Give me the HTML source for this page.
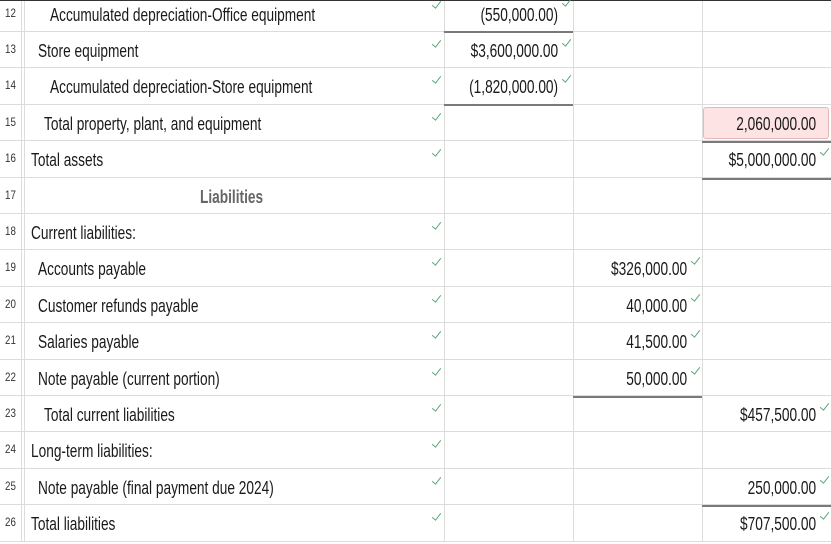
<!DOCTYPE html>
<html><head><meta charset="utf-8"><style>
body{margin:0;width:831px;height:542px;overflow:hidden;background:#fff;font-family:"Liberation Sans",sans-serif;position:relative}
.r{position:absolute;left:0;width:831px;height:36.4px;border-bottom:1px solid #dcdcdc;box-sizing:border-box}
.n{position:absolute;left:0;width:21px;text-align:center;font-size:11.5px;color:#333;line-height:37px;transform:scaleX(0.85)}
.l{position:absolute;top:0;line-height:39px;font-size:18px;color:#1a1a1a;white-space:nowrap;transform:scaleX(0.76);transform-origin:left center}
.v{position:absolute;top:0;line-height:39px;font-size:18px;color:#1a1a1a;white-space:nowrap;transform:scaleX(0.76);transform-origin:right center}
.a{right:273px}.b{right:144px}.cc{right:15px}
.c{position:absolute;width:3.5px;height:8px;border-right:1.8px solid #5aa87a;border-bottom:1.8px solid #5aa87a;transform:rotate(38deg)}
.vl{position:absolute;top:0;height:542px;width:1px;background:#dcdcdc}
.ul{position:absolute;height:2px;background:#7a7a7a}
</style></head><body>
<div class="vl" style="left:21px"></div><div class="vl" style="left:24px"></div>
<div class="vl" style="left:444px"></div><div class="vl" style="left:573px"></div><div class="vl" style="left:702px"></div>
<div style="position:absolute;left:0;top:0;width:831px;height:1px;background:#333"></div>

<div class="r" style="top:-4.4px"><span class="n">12</span><span class="l" style="left:50px">Accumulated depreciation-Office equipment</span><i class="c" style="left:434px;top:3px"></i><span class="v a">(550,000.00)</span><i class="c" style="left:564px;top:1px"></i></div>
<div class="r" style="top:32px"><span class="n">13</span><span class="l" style="left:38px">Store equipment</span><i class="c" style="left:434px;top:6px"></i><span class="v a">$3,600,000.00</span><i class="c" style="left:564px;top:5px"></i></div>
<div class="r" style="top:68.4px"><span class="n">14</span><span class="l" style="left:50px">Accumulated depreciation-Store equipment</span><i class="c" style="left:434px;top:6px"></i><span class="v a">(1,820,000.00)</span><i class="c" style="left:564px;top:5px"></i></div>
<div class="r" style="top:104.8px"><span class="n">15</span><span class="l" style="left:44px">Total property, plant, and equipment</span><i class="c" style="left:434px;top:6px"></i>
<div style="position:absolute;left:703px;top:2px;width:126px;height:32px;background:#fde3e3;border:1px solid #e6b8b8;border-radius:3px;box-sizing:border-box"></div><span class="v cc">2,060,000.00</span></div>
<div class="r" style="top:141.2px"><span class="n">16</span><span class="l" style="left:31px">Total assets</span><i class="c" style="left:434px;top:6px"></i><span class="v cc">$5,000,000.00</span><i class="c" style="left:822px;top:5px"></i></div>
<div class="r" style="top:177.6px"><span class="n">17</span><span class="l" style="left:200px;color:#666;font-weight:bold">Liabilities</span></div>
<div class="r" style="top:214px"><span class="n">18</span><span class="l" style="left:31px">Current liabilities:</span><i class="c" style="left:434px;top:6px"></i></div>
<div class="r" style="top:250.4px"><span class="n">19</span><span class="l" style="left:38px">Accounts payable</span><i class="c" style="left:434px;top:6px"></i><span class="v b">$326,000.00</span><i class="c" style="left:693px;top:5px"></i></div>
<div class="r" style="top:286.8px"><span class="n">20</span><span class="l" style="left:38px">Customer refunds payable</span><i class="c" style="left:434px;top:6px"></i><span class="v b">40,000.00</span><i class="c" style="left:693px;top:5px"></i></div>
<div class="r" style="top:323.2px"><span class="n">21</span><span class="l" style="left:38px">Salaries payable</span><i class="c" style="left:434px;top:6px"></i><span class="v b">41,500.00</span><i class="c" style="left:693px;top:5px"></i></div>
<div class="r" style="top:359.6px"><span class="n">22</span><span class="l" style="left:38px">Note payable (current portion)</span><i class="c" style="left:434px;top:6px"></i><span class="v b">50,000.00</span><i class="c" style="left:693px;top:5px"></i></div>
<div class="r" style="top:396px"><span class="n">23</span><span class="l" style="left:44px">Total current liabilities</span><i class="c" style="left:434px;top:6px"></i><span class="v cc">$457,500.00</span><i class="c" style="left:822px;top:5px"></i></div>
<div class="r" style="top:432.4px"><span class="n">24</span><span class="l" style="left:31px">Long-term liabilities:</span><i class="c" style="left:434px;top:6px"></i></div>
<div class="r" style="top:468.8px"><span class="n">25</span><span class="l" style="left:38px">Note payable (final payment due 2024)</span><i class="c" style="left:434px;top:6px"></i><span class="v cc">250,000.00</span><i class="c" style="left:822px;top:5px"></i></div>
<div class="r" style="top:505.2px"><span class="n">26</span><span class="l" style="left:31px">Total liabilities</span><i class="c" style="left:434px;top:6px"></i><span class="v cc">$707,500.00</span><i class="c" style="left:822px;top:5px"></i></div>

<div class="ul" style="left:444px;width:129px;top:31px"></div>
<div class="ul" style="left:444px;width:129px;top:104px"></div>
<div class="ul" style="left:702px;width:129px;top:141px"></div>
<div class="ul" style="left:702px;width:129px;top:177.5px"></div>
<div class="ul" style="left:573px;width:129px;top:395.5px"></div>
<div class="ul" style="left:702px;width:129px;top:504.5px"></div>
</body></html>
